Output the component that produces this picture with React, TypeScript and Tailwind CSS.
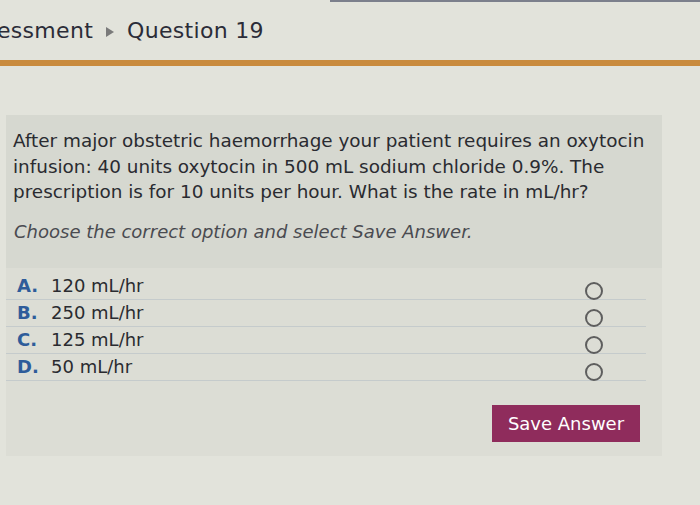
import React from "react";

const options = [
  { l: "A.", t: "120 mL/hr" },
  { l: "B.", t: "250 mL/hr" },
  { l: "C.", t: "125 mL/hr" },
  { l: "D.", t: "50 mL/hr" },
];

export default function App() {
  return (
    <div
      className="w-[700px] h-[505px] overflow-hidden bg-[#e2e3db] text-[#2a2b33]"
      style={{ fontFamily: '"DejaVu Sans", Verdana, sans-serif' }}
    >
      <div className="h-[2px] flex">
        <div className="w-[330px]" />
        <div className="flex-1 bg-[#7c808c]" />
      </div>
      <div className="h-[58px] flex items-center pb-[1px]">
        <div className="flex items-center -ml-[3px] text-[22px] tracking-[0.3px] text-[#2b2c38]">
          <span>essment</span>
          <svg width="10" height="12" viewBox="0 0 10 12" className="ml-[12px] mr-[12px] mt-[2px]">
            <polygon points="1,1 9,6 1,11" fill="#7a7a7a" />
          </svg>
          <span>Question 19</span>
        </div>
      </div>
      <div className="h-[6px] bg-[#c98b3e]" />
      <div className="h-[49px]" />
      <div className="ml-[6px] w-[656px]">
        <div className="bg-[#d6d8d0] pl-[7px] pr-[6px] pt-[13px] pb-[24px]">
          <p className="text-[18.4px] leading-[25.5px] text-[#2a2b30]">
            After major obstetric haemorrhage your patient requires an oxytocin
            infusion: 40 units oxytocin in 500 mL sodium chloride 0.9%. The
            prescription is for 10 units per hour. What is the rate in mL/hr?
          </p>
          <p className="mt-[14px] text-[18px] leading-[25px] italic text-[#4a4b50] pl-[1px]">
            Choose the correct option and select Save Answer.
          </p>
        </div>
        <div className="bg-[#dcddd5] pt-[5px] pb-[14px]">
          <div className="mr-[16px]">
            {options.map((o) => (
              <div
                key={o.l}
                className="h-[27px] flex items-center border-b border-[#c5cbcc] text-[18px]"
              >
                <span className="w-[36px] pl-[11px] font-bold text-[#2e5c9a]">{o.l}</span>
                <span className="ml-[9px] text-[#2a2b30]">{o.t}</span>
                <span className="ml-auto mr-[43px] mt-[11px] w-[18px] h-[18px] rounded-full border-2 border-[#5e5e5e]" />
              </div>
            ))}
          </div>
          <div className="flex justify-end mt-[24px] mr-[22px]">
            <button className="w-[148px] h-[37px] bg-[#8f2c5c] text-white text-[18px] flex items-center justify-center">
              Save Answer
            </button>
          </div>
        </div>
      </div>
    </div>
  );
}
